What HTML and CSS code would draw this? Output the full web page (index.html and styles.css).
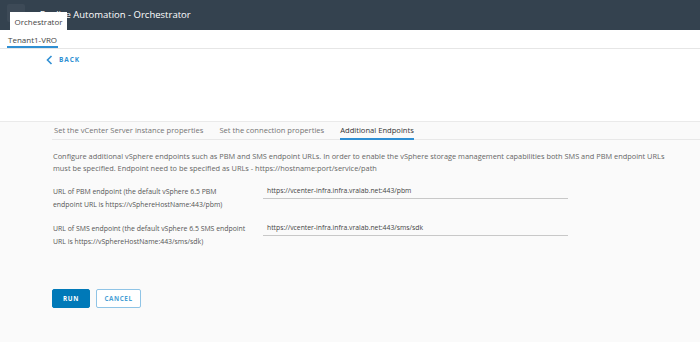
FILE: index.html
```html
<!DOCTYPE html>
<html>
<head>
<meta charset="utf-8">
<link rel="stylesheet" href="styles.css">
</head>
<body>
<header class="header">
  <div class="logo-box"></div>
  <div class="title">vRealize Automation - Orchestrator</div>
  <div class="tooltip">Orchestrator</div>
</header>
<nav class="subnav">
  <div class="subtab active">Tenant1-VRO</div>
</nav>
<div class="top">
  <a class="back">
    <svg width="7" height="10" viewBox="0 0 7 10"><path d="M5.5 1 L1.5 5 L5.5 9" fill="none" stroke="#2f8fd3" stroke-width="1.6"/></svg>
    <span>BACK</span>
  </a>
</div>
<main class="panel">
  <div class="tabs">
    <div class="tab">Set the vCenter Server instance properties</div>
    <div class="tab">Set the connection properties</div>
    <div class="tab active">Additional Endpoints</div>
  </div>
  <p class="desc">Configure additional vSphere endpoints such as PBM and SMS endpoint URLs. In order to enable the vSphere storage management capabilities both SMS and PBM endpoint URLs must be specified. Endpoint need to be specified as URLs - https://hostname:port/service/path</p>
  <div class="row">
    <div class="label">URL of PBM endpoint (the default vSphere 6.5 PBM<br>endpoint URL is https://vSphereHostName:443/pbm)</div>
    <div class="input">https://vcenter-infra.infra.vralab.net:443/pbm</div>
  </div>
  <div class="row">
    <div class="label">URL of SMS endpoint (the default vSphere 6.5 SMS endpoint<br>URL is https://vSphereHostName:443/sms/sdk)</div>
    <div class="input">https://vcenter-infra.infra.vralab.net:443/sms/sdk</div>
  </div>
  <div class="buttons">
    <button class="btn primary">RUN</button>
    <button class="btn outline">CANCEL</button>
  </div>
</main>
</body>
</html>
```
FILE: styles.css
```css
* { box-sizing: border-box; }
html, body { margin: 0; padding: 0; }
body {
  width: 700px;
  height: 342px;
  overflow: hidden;
  background: #fafafa;
  font-family: "Open Sans", "Liberation Sans", sans-serif;
  color: #565656;
}
.header {
  position: relative;
  height: 30px;
  background: #34424f;
  display: flex;
  align-items: center;
  padding-left: 7px;
}
.logo-box {
  width: 18px;
  height: 18px;
  background: #3d4a57;
  border-radius: 2px;
  margin-top: -5px;
}
.title {
  color: #fff;
  font-size: 9.5px;
  margin-left: 10px;
  margin-top: -2px;
}
.tooltip {
  position: absolute;
  left: 10px;
  top: 12px;
  width: 57px;
  height: 18px;
  background: #fff;
  color: #444;
  font-size: 8px;
  display: flex;
  align-items: center;
  justify-content: center;
}
.subnav {
  height: 19px;
  background: #fff;
  border-bottom: 1px solid #e6e6e6;
  display: flex;
  padding-left: 7px;
}
.subtab {
  font-size: 8px;
  color: #444;
  padding: 4px 1px 0;
  height: 18px;
}
.subtab.active { border-bottom: 2px solid #2f8fd3; }
.top {
  height: 73px;
  background: #fff;
  border-bottom: 1px solid #eaeaea;
  padding: 6px 0 0 46px;
  display: flex;
  align-items: flex-start;
}
.back {
  display: flex;
  align-items: center;
  gap: 6px;
  color: #2f8fd3;
  font-size: 6.5px;
  line-height: 10px;
  font-weight: 700;
  letter-spacing: 0.9px;
}
.panel {
  padding: 0 0 0 52px;
}
.tabs {
  display: flex;
  gap: 16px;
  border-bottom: 1px solid #e8e8e8;
  height: 18px;
  padding-left: 2px;
}
.tab {
  font-size: 7.6px;
  color: #747474;
  padding-top: 3px;
  height: 18px;
}
.tab.active {
  color: #333;
  border-bottom: 2px solid #2f8fd3;
}
.desc {
  margin: 10px 0 0 1px;
  width: 630px;
  font-size: 7.4px;
  line-height: 12px;
  color: #666;
}
.row {
  display: flex;
  margin-top: 11px;
}
.row + .row { margin-top: 11px; }
.label {
  width: 210px;
  font-size: 6.9px;
  line-height: 13px;
  color: #555;
  margin-left: 1px;
  white-space: nowrap;
}
.input {
  width: 305px;
  height: 14px;
  border-bottom: 1px solid #c8c8c8;
  font-size: 6.8px;
  color: #444;
  padding: 1px 0 0 4px;
}
.buttons {
  display: flex;
  gap: 6px;
  margin-top: 41px;
}
.btn {
  height: 19px;
  font-family: inherit;
  font-size: 6.3px;
  font-weight: 700;
  letter-spacing: 0.6px;
  border-radius: 2px;
  padding: 0;
}
.btn.primary {
  width: 38px;
  background: #0079b8;
  border: 1px solid #0079b8;
  color: #fff;
}
.btn.outline {
  width: 45px;
  background: #fff;
  border: 1px solid #8fc4e6;
  color: #4a9fd6;
}
```
